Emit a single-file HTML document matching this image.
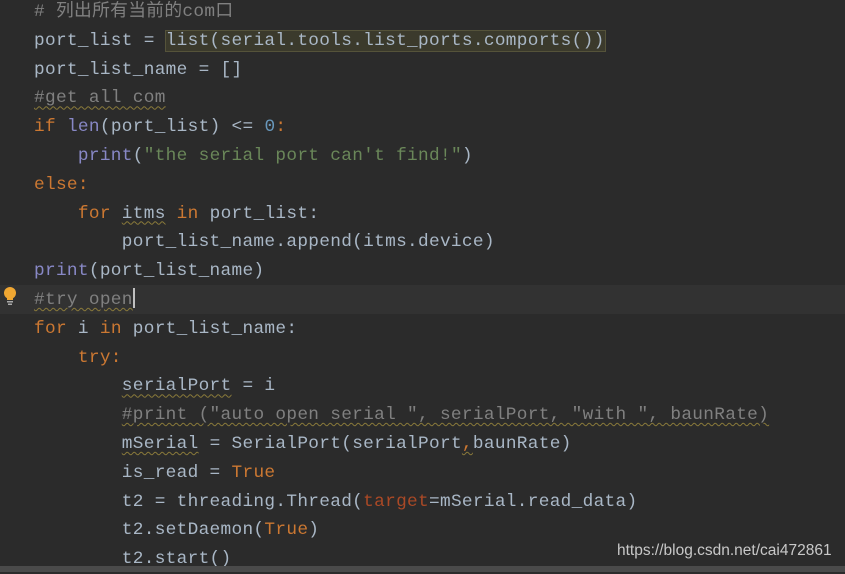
<!DOCTYPE html>
<html><head><meta charset="utf-8"><style>
html,body{margin:0;padding:0;width:845px;height:572px;overflow:hidden;background:#2b2b2b}
.code{position:absolute;left:34px;top:-2px;font-family:"Liberation Mono","Noto Sans CJK SC",monospace;font-size:17.75px;letter-spacing:0.32px;line-height:28.8px;color:#a9b7c6;white-space:pre}
.k{color:#cc7832}.c{color:#808080}.s{color:#6a8759}.n{color:#6897bb}.b{color:#8888c6}.p{color:#aa4926}
.w{text-decoration:underline wavy #8a7a3a;text-decoration-thickness:1px;text-underline-offset:3px}
.hl{background:#3b3a2c;outline:1px solid #55533a}
.cur{position:absolute;left:0;top:285px;width:845px;height:29px;background:#323232}
.bar{position:absolute;left:0;top:566px;width:845px;height:6px;background:#4a4a4a}
.wm{position:absolute;left:617px;top:542px;font-family:"Liberation Sans",sans-serif;font-size:15.5px;color:#c8c8c8}
.bulb{position:absolute;left:3px;top:286px}
.caret{display:inline-block;width:2px;height:20px;background:#c0c0c0;vertical-align:-4px}
</style></head><body>
<div class="cur"></div>
<svg class="bulb" width="14" height="20" viewBox="0 0 14 20"><circle cx="7" cy="7" r="6" fill="#f0a732"/><rect x="4" y="11" width="6" height="3" fill="#f0a732"/><rect x="4" y="15" width="6" height="1.5" fill="#aaa"/><rect x="5" y="17.5" width="4" height="1.5" fill="#aaa"/></svg>
<div class="code"><span class="c"># 列出所有当前的com口</span>
port_list = <span class="hl">list(serial.tools.list_ports.comports())</span>
port_list_name = []
<span class="c w">#get all com</span>
<span class="k">if</span> <span class="b">len</span>(port_list) &lt;= <span class="n">0</span><span class="k">:</span>
    <span class="b">print</span>(<span class="s">"the serial port can't find!"</span>)
<span class="k">else:</span>
    <span class="k">for</span> <span class="w">itms</span> <span class="k">in</span> port_list:
        port_list_name.append(itms.device)
<span class="b">print</span>(port_list_name)
<span class="c w">#try open</span><span class="caret"></span>
<span class="k">for</span> i <span class="k">in</span> port_list_name:
    <span class="k">try:</span>
        <span class="w">serialPort</span> = i
        <span class="c w">#print ("auto open serial ", serialPort, "with ", baunRate)</span>
        <span class="w">mSerial</span> = SerialPort(serialPort<span class="k w">,</span>baunRate)
        is_read = <span class="k">True</span>
        t2 = threading.Thread(<span class="p">target</span>=mSerial.read_data)
        t2.setDaemon(<span class="k">True</span>)
        t2.start()</div>
<div class="bar"></div>
<div class="wm">https://blog.csdn.net/cai472861</div>
</body></html>
